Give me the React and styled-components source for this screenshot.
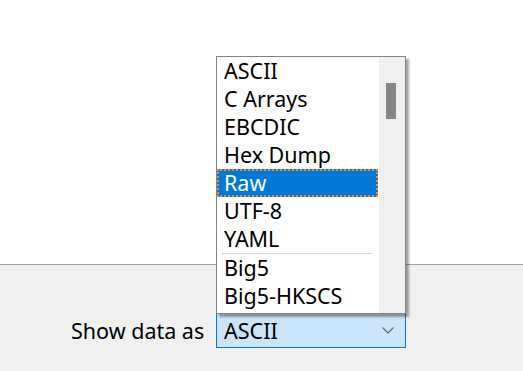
import styled, { createGlobalStyle } from "styled-components";

const GlobalStyle = createGlobalStyle`
  html, body {
    margin: 0;
    padding: 0;
  }
  body {
    font-family: "Noto Sans", "Open Sans", sans-serif;
    background: #ffffff;
  }
`;

const Window = styled.div`
  width: 523px;
  height: 371px;
  display: flex;
  flex-direction: column;
  overflow: hidden;
`;

const Content = styled.div`
  height: 264px;
  background: #ffffff;
  border-bottom: 1px solid #a0a0a0;
`;

const Panel = styled.div`
  flex: 1;
  background: #f0f0f0;
  display: flex;
  align-items: flex-start;
  padding: 48px 0 0 71px;
  box-sizing: border-box;
`;

const Label = styled.span`
  font-size: 21.5px;
  line-height: 35px;
  color: #000000;
  width: 145px;
`;

const ComboWrap = styled.div`
  position: relative;
`;

const Combo = styled.div`
  width: 190px;
  height: 35px;
  box-sizing: border-box;
  border: 1px solid #0078d7;
  background: #cce4f7;
  display: flex;
  align-items: center;
  justify-content: space-between;
  padding: 0 11px 0 7px;
  font-size: 21.5px;
  color: #000000;
`;

const Popup = styled.div`
  position: absolute;
  left: 0;
  bottom: 34px;
  width: 190px;
  height: 258px;
  box-sizing: border-box;
  border: 1px solid #828282;
  background: #ffffff;
  box-shadow: 3px 3px 2px rgba(0, 0, 0, 0.35);
  display: flex;
`;

const List = styled.div`
  width: 162px;
  display: flex;
  flex-direction: column;
`;

const Item = styled.div`
  height: 28px;
  font-size: 21.5px;
  margin-right: 1px;
  box-sizing: border-box;
  white-space: nowrap;
  color: ${(p) => (p.$selected ? "#ffffff" : "#000000")};
  background: ${(p) => (p.$selected ? "#0078d7" : "transparent")};
  border: ${(p) => (p.$selected ? "2px dotted #ff8728" : "none")};
  padding-left: ${(p) => (p.$selected ? "5px" : "7px")};
  line-height: ${(p) => (p.$selected ? "24px" : "28px")};
`;

const Separator = styled.div`
  height: 1px;
  background: #d5d5d5;
  margin: 0 7px 0 5px;
`;

const Scrollbar = styled.div`
  flex: 1;
  background: #f0f0f0;
  position: relative;
`;

const Thumb = styled.div`
  position: absolute;
  left: 7px;
  top: 26px;
  width: 10px;
  height: 36px;
  background: #868686;
`;

const Chevron = () => (
  <svg width="12" height="7" viewBox="0 0 12 7">
    <path d="M0.5 0.5 L6 6 L11.5 0.5" fill="none" stroke="#606060" strokeWidth="1.1" />
  </svg>
);

const options = ["ASCII", "C Arrays", "EBCDIC", "Hex Dump", "Raw", "UTF-8", "YAML"];
const encodings = ["Big5", "Big5-HKSCS"];

export default function App() {
  return (
    <Window>
      <GlobalStyle />
      <Content />
      <Panel>
        <Label>Show data as</Label>
        <ComboWrap>
          <Combo>
            <span>ASCII</span>
            <Chevron />
          </Combo>
          <Popup>
            <List>
              {options.map((o) => (
                <Item key={o} $selected={o === "Raw"}>
                  {o}
                </Item>
              ))}
              <Separator />
              {encodings.map((o) => (
                <Item key={o}>{o}</Item>
              ))}
            </List>
            <Scrollbar>
              <Thumb />
            </Scrollbar>
          </Popup>
        </ComboWrap>
      </Panel>
    </Window>
  );
}
